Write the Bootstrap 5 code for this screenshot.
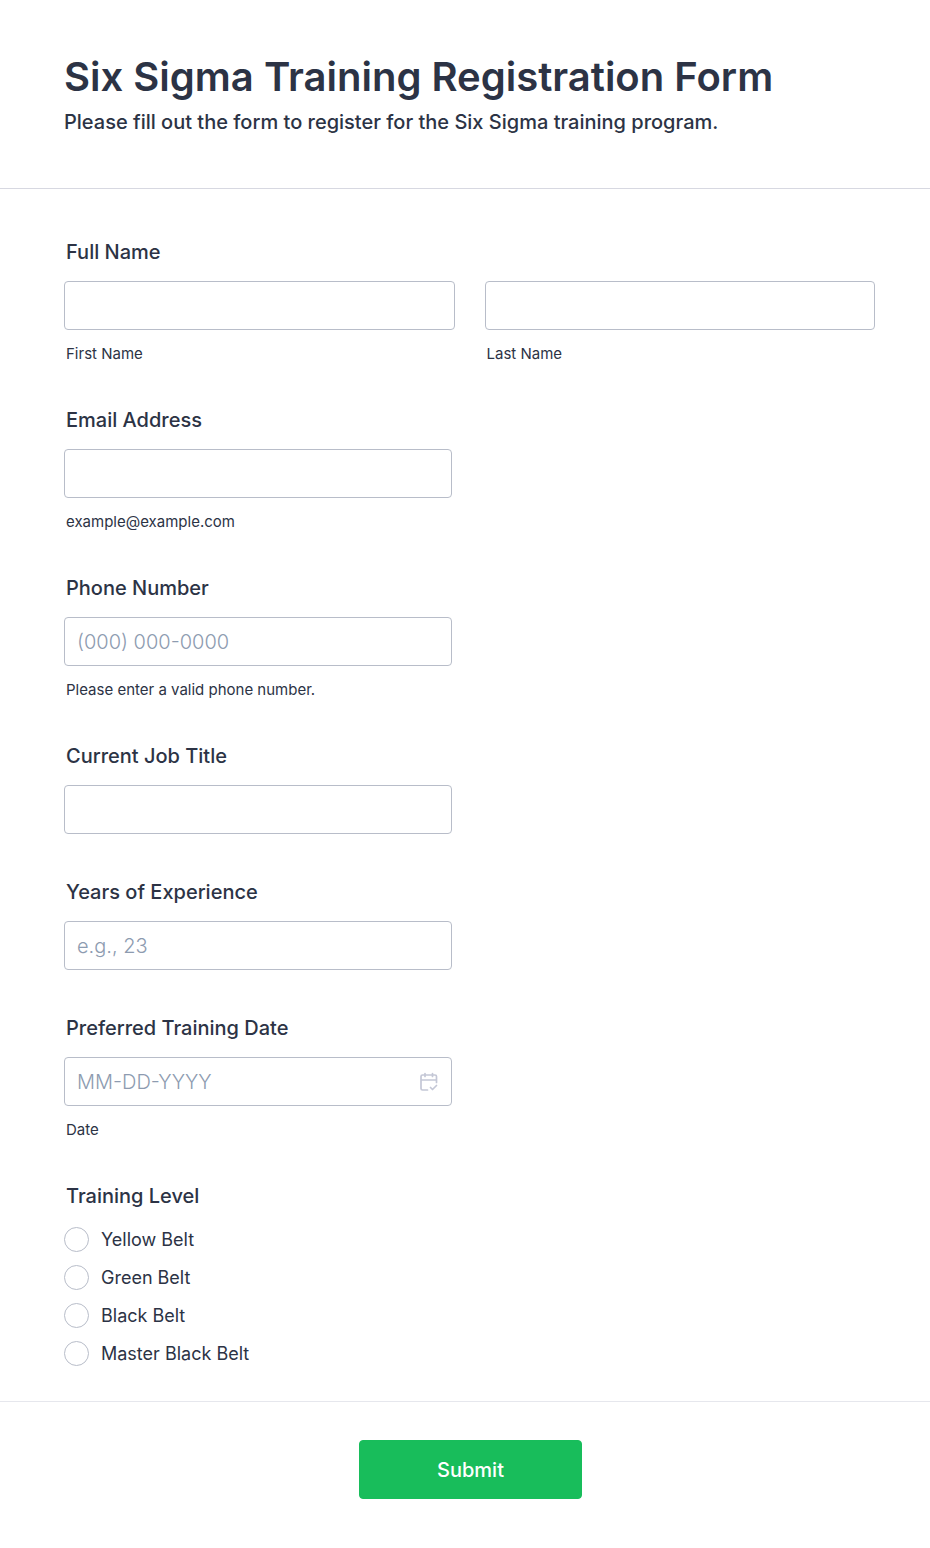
<!DOCTYPE html>
<html lang="en">
<head>
<meta charset="utf-8">
<meta name="viewport" content="width=device-width, initial-scale=1">
<title>Six Sigma Training Registration Form</title>
<link href="https://cdn.jsdelivr.net/npm/bootstrap@5.3.0/dist/css/bootstrap.min.css" rel="stylesheet">
<style>
  body { font-family: Inter, sans-serif; color: #2c3345; background: #fff; }
  .form-head { padding: 54px 64px; border-bottom: 1px solid #d7d8e1; }
  .form-head h1 { font-size: 40px; line-height: 46px; font-weight: 600; }
  .form-head p { font-size: 20px; line-height: 24px; font-weight: 500; margin-top: 10px; }
  .form-fields { padding: 49px 55px 35px 64px; gap: 44px; }
  .field-title { font-size: 20px; line-height: 28px; font-weight: 500; margin: 0 0 15px; padding-left: 2px; float: none; }
  .half-col { width: calc(50% - 18px); }
  .name-pair { gap: 30px; }
  .field-box { height: 49px; border: 1px solid #b8bdc9; border-radius: 4px; padding: 0 12px; font-size: 20px; font-weight: 300; color: #2c3345; }
  .field-box::placeholder { color: #8d9bb0; opacity: 1; }
  .field-note { display: block; font-size: 15px; line-height: 17px; margin-top: 15px; padding-left: 2px; }
  .date-icon { right: 13px; top: 15px; width: 20px; height: 20px; color: #c4c7d6; pointer-events: none; }
  .level-title { margin-bottom: 17px; }
  .level-list { gap: 13px; }
  .level-row { gap: 12px; }
  .level-row .form-check-input { width: 25px; height: 25px; border: 1px solid #b8bdc9; float: none; }
  .level-row label { font-size: 18px; line-height: 25px; }
  .form-foot { border-top: 1px solid #e6e7ed; padding: 38px 0 48px 11px; }
  .submit-btn { width: 223px; height: 59px; background: #18bd5b; border-color: #18bd5b; border-radius: 4px; color: #fff; font-size: 20px; font-weight: 500; }
  .submit-btn:hover { background: #16aa52; color: #fff; }
</style>
</head>
<body>
<form>
  <header class="form-head">
    <h1 class="mb-0">Six Sigma Training Registration Form</h1>
    <p class="mb-0">Please fill out the form to register for the Six Sigma training program.</p>
  </header>
  <main class="form-fields d-flex flex-column">
    <fieldset>
      <legend class="field-title">Full Name</legend>
      <div class="name-pair d-flex">
        <div class="flex-fill"><input class="form-control field-box" id="first" type="text"><label class="field-note" for="first">First Name</label></div>
        <div class="flex-fill"><input class="form-control field-box" id="last" type="text"><label class="field-note" for="last">Last Name</label></div>
      </div>
    </fieldset>
    <div class="half-col">
      <label class="field-title d-block" for="email">Email Address</label>
      <input class="form-control field-box" id="email" type="email">
      <span class="field-note">example@example.com</span>
    </div>
    <div class="half-col">
      <label class="field-title d-block" for="phone">Phone Number</label>
      <input class="form-control field-box" id="phone" type="tel" placeholder="(000) 000-0000">
      <span class="field-note">Please enter a valid phone number.</span>
    </div>
    <div class="half-col">
      <label class="field-title d-block" for="job">Current Job Title</label>
      <input class="form-control field-box" id="job" type="text">
    </div>
    <div class="half-col">
      <label class="field-title d-block" for="years">Years of Experience</label>
      <input class="form-control field-box" id="years" type="text" placeholder="e.g., 23">
    </div>
    <div class="half-col">
      <label class="field-title d-block" for="date">Preferred Training Date</label>
      <div class="position-relative">
        <input class="form-control field-box" id="date" type="text" placeholder="MM-DD-YYYY">
        <svg class="date-icon position-absolute" viewBox="0 0 20 20" fill="none" stroke="currentColor" stroke-width="1.7" stroke-linecap="round" stroke-linejoin="round" aria-hidden="true"><path d="M8.500 18H3.500A1.500 1.500 0 0 1 2 16.500V4.500A1.500 1.500 0 0 1 3.500 3h12.500A1.500 1.500 0 0 1 17.500 4.500V10.500M2 8h15.500M6 1.500v3M13.500 1.500v3M11.500 15.500l2 2 4-4"/></svg>
      </div>
      <span class="field-note">Date</span>
    </div>
    <fieldset>
      <legend class="field-title level-title">Training Level</legend>
      <div class="level-list d-flex flex-column">
        <div class="level-row d-flex"><input class="form-check-input m-0" type="radio" name="level" id="l1"><label for="l1">Yellow Belt</label></div>
        <div class="level-row d-flex"><input class="form-check-input m-0" type="radio" name="level" id="l2"><label for="l2">Green Belt</label></div>
        <div class="level-row d-flex"><input class="form-check-input m-0" type="radio" name="level" id="l3"><label for="l3">Black Belt</label></div>
        <div class="level-row d-flex"><input class="form-check-input m-0" type="radio" name="level" id="l4"><label for="l4">Master Black Belt</label></div>
      </div>
    </fieldset>
  </main>
  <footer class="form-foot d-flex justify-content-center">
    <button class="btn submit-btn" type="submit">Submit</button>
  </footer>
</form>
<script src="https://cdn.jsdelivr.net/npm/bootstrap@5.3.0/dist/js/bootstrap.bundle.min.js"></script>
</body>
</html>
